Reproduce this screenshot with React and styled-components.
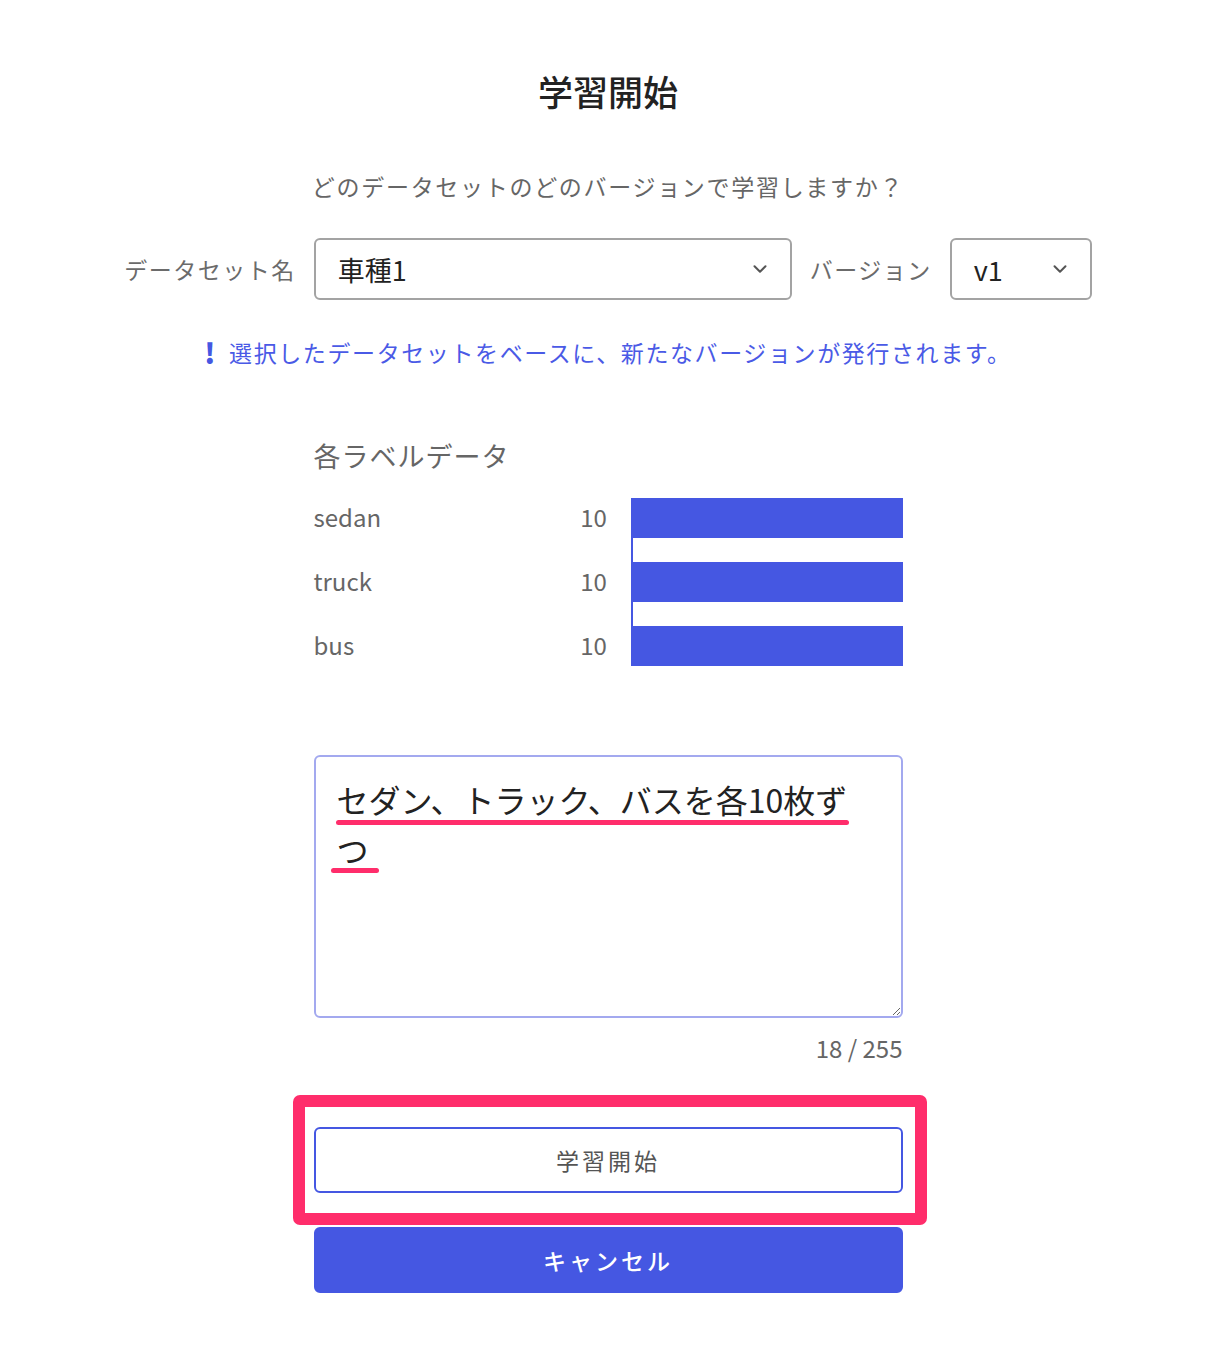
import React from 'react';
import styled, { createGlobalStyle } from 'styled-components';
import { ChevronDown } from 'lucide-react';

const GlobalStyle = createGlobalStyle`
  body {
    margin: 0;
    background: #fff;
    font-family: "Noto Sans CJK JP", "Noto Sans", sans-serif;
    color: #222;
  }
`

const Page = styled.div`
  display: flex;
  flex-direction: column;
  align-items: center;
  padding: 66px 0 52px;
`

const Title = styled.h1`
  margin: 0;
  font-size: 35px;
  line-height: 50px;
  font-weight: 500;
  color: #222;
`

const Lead = styled.p`
  margin: 52px 0 0;
  font-size: 23px;
  line-height: 36px;
  letter-spacing: 1.7px;
  color: #666;
`

const SelectRow = styled.div`
  display: flex;
  align-items: center;
  gap: 18px;
  margin-top: 34px;
`

const FieldLabel = styled.span`
  font-size: 23px;
  letter-spacing: 1.5px;
  color: #6b6b6b;
`

const SelectBox = styled.div`
  box-sizing: border-box;
  width: ${p => p.$width}px;
  height: 62px;
  display: flex;
  align-items: center;
  justify-content: space-between;
  padding: 0 19px 0 22px;
  border: 2px solid #a3a3a3;
  border-radius: 6px;
  font-size: 27px;
  color: #222;
  svg { color: #555; }
`

const Note = styled.p`
  margin: 34px 0 0;
  display: flex;
  align-items: center;
  gap: 12px;
  font-size: 23px;
  line-height: 36px;
  letter-spacing: 1.6px;
  color: #4a5ae6;
`

const Bang = styled.span`
  font-size: 28px;
  font-weight: 900;
  color: #4557e2;
`

const Column = styled.div`
  width: 589px;
  display: flex;
  flex-direction: column;
`

const SectionTitle = styled.h2`
  margin: 68px 0 0;
  font-size: 27px;
  line-height: 36px;
  font-weight: 400;
  letter-spacing: 1px;
  color: #666;
`

const Chart = styled.div`
  display: flex;
  margin-top: 24px;
`

const Legend = styled.div`
  display: grid;
  grid-template-columns: 1fr auto;
  grid-auto-rows: 40px;
  row-gap: 24px;
  width: 296px;
  padding-right: 24px;
  align-items: center;
  font-size: 24px;
  line-height: 36px;
  color: #666;
  span { margin-top: -3px; }
`

const Count = styled.span`
  text-align: right;
`

const Bars = styled.div`
  display: flex;
  flex-direction: column;
  gap: 24px;
  width: 272px;
  border-left: 2px solid #4557e2;
`

const Bar = styled.div`
  height: 40px;
  background: #4557e2;
`

const TextWrap = styled.div`
  position: relative;
  margin-top: 89px;
`

const TextArea = styled.textarea`
  box-sizing: border-box;
  display: block;
  width: 100%;
  height: 263px;
  padding: 17px 40px 0 21px;
  border: 2px solid #a3a9ef;
  border-radius: 6px;
  font-family: inherit;
  font-size: 32px;
  line-height: 50px;
  color: #222;
  outline: none;
`

const Mark = styled.span`
  position: absolute;
  left: ${p => p.$left}px;
  top: ${p => p.$top}px;
  width: ${p => p.$width}px;
  height: 5px;
  border-radius: 3px;
  background: #ff2d6b;
  pointer-events: none;
`

const Counter = styled.div`
  margin-top: 12px;
  text-align: right;
  font-size: 24px;
  line-height: 36px;
  color: #666;
`

const Highlight = styled.div`
  position: relative;
  margin-top: 61px;
`

const HighlightFrame = styled.div`
  position: absolute;
  top: -32px;
  left: -21px;
  right: -24px;
  bottom: -32px;
  border: 12px solid #ff2d6b;
  border-radius: 7px;
  pointer-events: none;
`

const Button = styled.button`
  box-sizing: border-box;
  width: 100%;
  height: 66px;
  border-radius: 6px;
  font-family: inherit;
  font-size: 23px;
  letter-spacing: 3px;
  cursor: pointer;
  border: 2px solid #4557e2;
  background: ${p => p.$primary ? '#4557e2' : '#fff'};
  color: ${p => p.$primary ? '#fff' : '#555'};
  font-weight: ${p => p.$primary ? 500 : 400};
`

const CancelButton = styled(Button)`
  margin-top: 34px;
`

const labels = [
  { name: 'sedan', count: 10 },
  { name: 'truck', count: 10 },
  { name: 'bus', count: 10 },
];

export default function App() {
  const max = Math.max(...labels.map(l => l.count));
  return (
    <>
      <GlobalStyle />
      <Page>
        <Title>学習開始</Title>
        <Lead>どのデータセットのどのバージョンで学習しますか？</Lead>

        <SelectRow>
          <FieldLabel>データセット名</FieldLabel>
          <SelectBox $width={478}>
            <span>車種1</span>
            <ChevronDown size={22} strokeWidth={2.2} />
          </SelectBox>
          <FieldLabel>バージョン</FieldLabel>
          <SelectBox $width={142}>
            <span>v1</span>
            <ChevronDown size={22} strokeWidth={2.2} />
          </SelectBox>
        </SelectRow>

        <Note>
          <Bang>!</Bang>
          選択したデータセットをベースに、新たなバージョンが発行されます。
        </Note>

        <Column>
          <SectionTitle>各ラベルデータ</SectionTitle>
          <Chart>
            <Legend>
              {labels.map(l => (
                <React.Fragment key={l.name}>
                  <span>{l.name}</span>
                  <Count>{l.count}</Count>
                </React.Fragment>
              ))}
            </Legend>
            <Bars>
              {labels.map(l => (
                <Bar key={l.name} style={{ width: `${(l.count / max) * 100}%` }} />
              ))}
            </Bars>
          </Chart>

          <TextWrap>
            <TextArea defaultValue="セダン、トラック、バスを各10枚ずつ" spellCheck={false} />
            <Mark $left={22} $top={65} $width={513} />
            <Mark $left={17} $top={113} $width={48} />
          </TextWrap>
          <Counter>18 / 255</Counter>

          <Highlight>
            <Button>学習開始</Button>
            <HighlightFrame />
          </Highlight>
          <CancelButton $primary>キャンセル</CancelButton>
        </Column>
      </Page>
    </>
  );
}
